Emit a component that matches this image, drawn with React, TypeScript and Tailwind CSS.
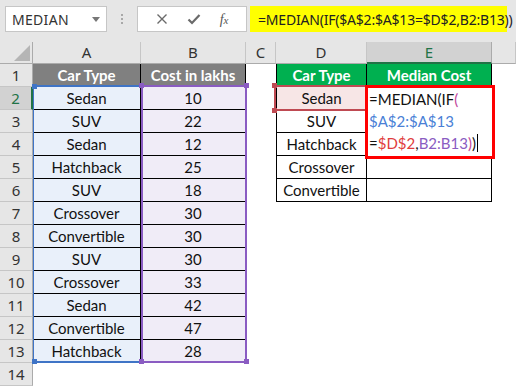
import React from "react";

const cols = ["A", "B", "C", "D", "E", ""];

const carData: [string, number][] = [
  ["Sedan", 10],
  ["SUV", 22],
  ["Sedan", 12],
  ["Hatchback", 25],
  ["SUV", 18],
  ["Crossover", 30],
  ["Convertible", 30],
  ["SUV", 30],
  ["Crossover", 33],
  ["Sedan", 42],
  ["Convertible", 47],
  ["Hatchback", 28],
];

const lookup = ["Car Type", "Sedan", "SUV", "Hatchback", "Crossover", "Convertible"];

const cellFont = { fontFamily: "Lato, 'Liberation Sans', sans-serif" };
const uiFont = { fontFamily: "'Noto Sans', 'Open Sans', sans-serif" };

function Handle({ className }: { className: string }) {
  return <div className={`absolute w-[5px] h-[5px] ${className}`} />;
}

export default function App() {
  const rows = Array.from({ length: 14 }, (_, i) => i + 1);

  function cell(r: number, c: number) {
    // r: 1..14, c: 0..5 (A..F)
    const base = "flex items-center justify-center text-[15px] text-[#111] leading-none";
    // table 1: A1:B13
    if (c <= 1 && r <= 13) {
      if (r === 1) {
        return (
          <div className={`${base} bg-[#808080] text-white font-bold border-r border-black`}>
            {c === 0 ? "Car Type" : "Cost in lakhs"}
          </div>
        );
      }
      const [t, v] = carData[r - 2];
      return (
        <div
          className={`${base} border-r border-b border-black ${
            c === 0 ? "bg-[#e9f0fa]" : "bg-[#f0ecf7]"
          }`}
        >
          {c === 0 ? t : v}
        </div>
      );
    }
    // table 2: D1:E6
    if ((c === 3 || c === 4) && r <= 6) {
      if (r === 1) {
        return (
          <div
            className={`${base} bg-[#00b050] text-white font-bold border-r border-b border-black ${
              c === 3 ? "border-l" : ""
            }`}
          >
            {c === 3 ? "Car Type" : "Median Cost"}
          </div>
        );
      }
      return (
        <div
          className={`${base} border-r border-b border-black ${c === 3 ? "border-l" : ""} ${
            c === 3 && r === 2 ? "bg-[#f7e6e6]" : "bg-white"
          }`}
        >
          {c === 3 ? lookup[r - 1] : ""}
        </div>
      );
    }
    return <div className="bg-white" />;
  }

  return (
    <div className="w-[516px] h-[386px] overflow-hidden bg-[#e6e6e6] relative" style={uiFont}>
      {/* formula bar */}
      <div className="h-[42px] flex items-start pt-[6px]">
        <div className="ml-[5px] w-[102px] h-[26px] bg-white border border-[#c6c6c6] flex items-center justify-between pl-[6px] pr-[6px]">
          <span className="text-[14px] text-[#333] tracking-[0.3px]">MEDIAN</span>
          <span className="w-0 h-0 border-l-[4px] border-r-[4px] border-t-[5px] border-l-transparent border-r-transparent border-t-[#777]" />
        </div>
        <div className="w-[30px] h-[26px] flex flex-col items-center justify-center gap-[2px]">
          <span className="w-[2px] h-[2px] bg-[#a8a8a8]" />
          <span className="w-[2px] h-[2px] bg-[#a8a8a8]" />
          <span className="w-[2px] h-[2px] bg-[#a8a8a8]" />
        </div>
        <div className="w-[110px] h-[26px] bg-white border border-[#c6c6c6] flex items-center justify-around px-[8px]">
          <svg width="12" height="12" viewBox="0 0 12 12">
            <path d="M1.5 1.5 L10.5 10.5 M10.5 1.5 L1.5 10.5" stroke="#6a6a6a" strokeWidth="1.4" />
          </svg>
          <svg width="14" height="12" viewBox="0 0 14 12">
            <path d="M1.5 6.5 L5 10 L12.5 2" stroke="#6a6a6a" strokeWidth="2.2" fill="none" />
          </svg>
          <span
            className="text-[14px] text-[#555] italic"
            style={{ fontFamily: "'Liberation Serif', serif" }}
          >
            f<span className="text-[11px]">x</span>
          </span>
        </div>
        <div className="ml-[3px] w-[257px] h-[26px] bg-[#ffff00] flex items-center pl-[8px] text-[14px] text-[#222] tracking-[-0.2px] whitespace-nowrap">
          =MEDIAN(IF($A$2:$A$13=$D$2,B2:B13))
        </div>
      </div>

      {/* sheet */}
      <div className="relative grid grid-cols-[33px_108px_105px_30px_91px_125px_24px] grid-rows-[22px_repeat(14,23px)]">
        {/* column headers */}
        <div className="bg-[#e6e6e6] border-r border-b border-[#ababab] relative">
          <svg className="absolute right-[2px] bottom-[2px]" width="16" height="16" viewBox="0 0 16 16">
            <path d="M16 0 L16 16 L0 16 Z" fill="#b5b5b5" />
          </svg>
        </div>
        {cols.map((c, i) => (
          <div
            key={i}
            className={`flex items-center justify-center text-[15px] border-r ${
              c === "E"
                ? "bg-[#d2d2d2] text-[#217346] border-b-2 border-b-[#217346] border-r-[#ababab]"
                : "bg-[#e6e6e6] text-[#333] border-b border-[#ababab] border-r-[#c6c6c6]"
            }`}
          >
            {c}
          </div>
        ))}

        {rows.map((r) => (
          <React.Fragment key={r}>
            <div
              className={`flex items-center justify-center text-[15px] border-b border-b-[#c6c6c6] ${
                r === 2
                  ? "bg-[#d2d2d2] text-[#217346] border-r-2 border-r-[#217346]"
                  : "bg-[#e6e6e6] text-[#333] border-r border-r-[#ababab]"
              }`}
            >
              {r}
            </div>
            {cols.map((_, c) => (
              <React.Fragment key={c}>
                {React.cloneElement(cell(r, c), { style: cellFont })}
              </React.Fragment>
            ))}
          </React.Fragment>
        ))}

        {/* range finder: A2:A13 */}
        <div className="absolute left-[33px] top-[43px] w-[108px] h-[278px] border-t-2 border-b-2 border-l border-[#3f74c6] pointer-events-none" />
        <Handle className="left-[32px] top-[42px] bg-[#3f74c6]" />
        <Handle className="left-[32px] top-[317px] bg-[#3f74c6]" />

        {/* range finder: B2:B13 */}
        <div className="absolute left-[141px] top-[43px] w-[106px] h-[278px] border-2 border-[#8a5cc2] pointer-events-none" />
        <Handle className="left-[139px] top-[41px] bg-[#8a5cc2]" />
        <Handle className="left-[244px] top-[41px] bg-[#8a5cc2]" />
        <Handle className="left-[139px] top-[317px] bg-[#8a5cc2]" />
        <Handle className="left-[244px] top-[317px] bg-[#8a5cc2]" />

        {/* range finder: D2 */}
        <div className="absolute left-[274px] top-[43px] w-[94px] h-[26px] border-2 border-[#bf4a52] pointer-events-none" />
        <Handle className="left-[272px] top-[41px] bg-[#bf4a52]" />
        <Handle className="left-[272px] top-[66px] bg-[#bf4a52]" />

        {/* in-cell edit box E2 */}
        <div
          className="absolute left-[365px] top-[43px] w-[130px] h-[74px] bg-white border-[3px] border-[#ff0000] pl-[1px] text-[15px] leading-[22px] text-[#111]"
          style={cellFont}
        >
          <div>
            =MEDIAN(IF<span className="text-[#c2479b]">(</span>
          </div>
          <div className="text-[#4a7fd6]">$A$2:$A$13</div>
          <div className="flex items-center">
            =<span className="text-[#e03c3c]">$D$2</span>,
            <span className="text-[#8a5cc2]">B2:B13</span>
            <span className="text-[#c2479b]">)</span>)
            <span className="ml-[1px] w-[1px] h-[18px] bg-black" />
          </div>
        </div>
      </div>
    </div>
  );
}
